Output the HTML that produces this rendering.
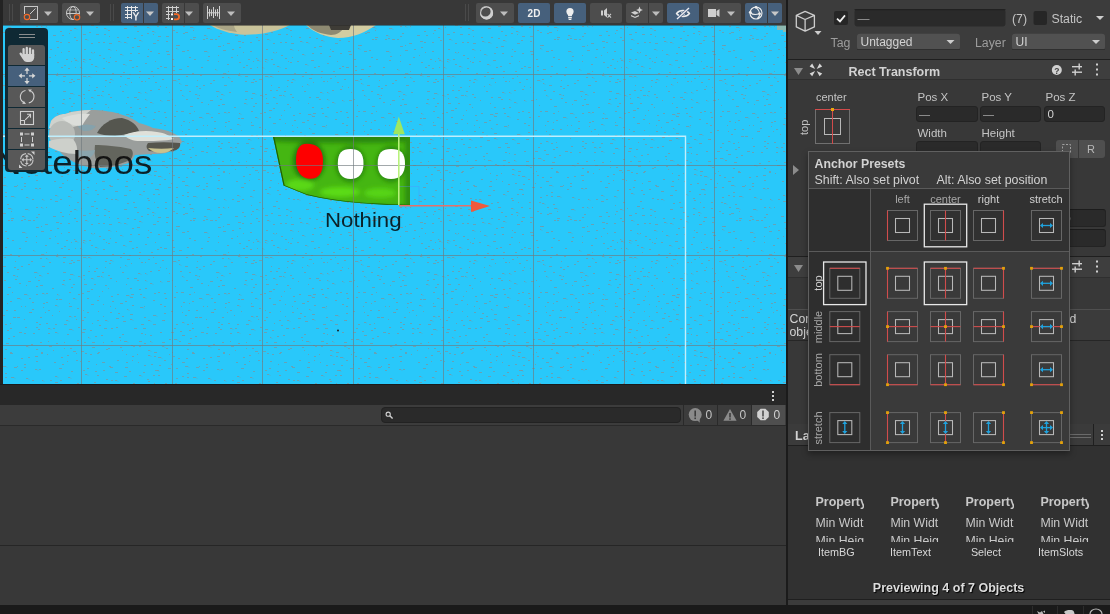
<!DOCTYPE html>
<html><head><meta charset="utf-8">
<style>
*{margin:0;padding:0;box-sizing:border-box}
html,body{width:1110px;height:614px;overflow:hidden;background:#191919;font-family:"Liberation Sans",sans-serif;color:#c4c4c4}
.a{position:absolute}
.btn{position:absolute;background:#4d4d4d;border-radius:2px}
.sel{background:#46607c}
.dd{position:absolute;width:0;height:0;border-left:4px solid transparent;border-right:4px solid transparent;border-top:5px solid #bdbdbd}
.fld{position:absolute;background:#2a2a2a;border:1px solid #232323;border-radius:3px}
.lbl{position:absolute;font-size:11.5px;color:#c4c4c4;white-space:nowrap;line-height:1}
</style></head><body><div id="root" style="position:absolute;left:0;top:0;width:1110px;height:614px;background:#191919;will-change:transform;overflow:hidden">
<!-- scene toolbar -->
<div class="a" style="left:0;top:0;width:786px;height:25px;background:#383838"></div>
<div class="a" style="left:0;top:0;width:3px;height:384px;background:#232323"></div>
<!-- toolbar content -->
<div class="a" style="left:9px;top:4px;width:1px;height:17px;background:#4a4a4a"></div>
<div class="a" style="left:12px;top:4px;width:1px;height:17px;background:#4a4a4a"></div>
<div class="btn" style="left:20px;top:3px;width:38px;height:20px"></div>
<svg class="a" style="left:20px;top:3px" width="38" height="20">
<rect x="4.5" y="3.5" width="13" height="13" fill="none" stroke="#c8c8c8" stroke-width="1"/>
<line x1="10" y1="11" x2="15.5" y2="5.5" stroke="#c8c8c8" stroke-width="1"/>
<rect x="4" y="11" width="6" height="6" fill="#4d4d4d"/>
<circle cx="7" cy="14" r="2.7" fill="none" stroke="#f26b2a" stroke-width="1.2"/>
<path d="M24 8.5h8l-4 4.5z" fill="#bdbdbd"/>
</svg>
<div class="btn" style="left:62px;top:3px;width:38px;height:20px"></div>
<svg class="a" style="left:62px;top:3px" width="38" height="20">
<circle cx="11" cy="10" r="6.5" fill="none" stroke="#c8c8c8" stroke-width="1"/>
<ellipse cx="11" cy="10" rx="3.2" ry="6.5" fill="none" stroke="#c8c8c8" stroke-width="1"/>
<line x1="4.5" y1="10.5" x2="17.5" y2="10.5" stroke="#c8c8c8" stroke-width="1"/>
<line x1="5.5" y1="7" x2="16.5" y2="7" stroke="#c8c8c8" stroke-width="0.8"/>
<circle cx="15" cy="14.3" r="3.6" fill="#4d4d4d"/>
<circle cx="15" cy="14.3" r="2.7" fill="none" stroke="#f26b2a" stroke-width="1.2"/>
<path d="M24 8.5h8l-4 4.5z" fill="#bdbdbd"/>
</svg>
<div class="a" style="left:110px;top:4px;width:1px;height:17px;background:#4a4a4a"></div>
<div class="a" style="left:113px;top:4px;width:1px;height:17px;background:#4a4a4a"></div>
<div class="btn sel" style="left:121px;top:3px;width:22px;height:20px;border-radius:2px 0 0 2px"></div>
<div class="btn sel" style="left:144px;top:3px;width:14px;height:20px;border-radius:0 2px 2px 0"></div>
<svg class="a" style="left:121px;top:3px" width="37" height="20">
<g stroke="#e8e8e8" stroke-width="1" fill="none">
<path d="M4 4.5h13M4 7.5h13M4 11.5h7M4 14.5h6M6.5 3v13M10.5 3v13M14.5 3v6"/>
</g>
<path d="M11.4 9.2h1.6l1.9 3.2 1.9-3.2h1.6l-2.8 4.6v3.6h-1.4v-3.6z" fill="#f0f0f0"/>
<path d="M27 8.5h8l-4 4.5z" fill="#c8c8c8" transform="translate(-2,0)"/>
</svg>
<div class="btn" style="left:162px;top:3px;width:22px;height:20px;border-radius:2px 0 0 2px"></div>
<div class="btn" style="left:185px;top:3px;width:14px;height:20px;border-radius:0 2px 2px 0"></div>
<svg class="a" style="left:162px;top:3px" width="37" height="20">
<g stroke="#cfcfcf" stroke-width="1" fill="none">
<path d="M4 4.5h13M4 8.5h13M4 11.5h4M4 15.5h4M6.5 3v14M10.5 3v7M14.5 3v7"/>
</g>
<rect x="9" y="10.4" width="2" height="2" fill="#fff"/>
<rect x="9" y="15" width="2" height="2" fill="#fff"/>
<path d="M12 11.2h2.5a2.6 2.6 0 0 1 0 5.2H12" fill="none" stroke="#f26b2a" stroke-width="1.8"/>
<path d="M23 8.5h8l-4 4.5z" fill="#bdbdbd"/>
</svg>
<div class="btn" style="left:203px;top:3px;width:38px;height:20px"></div>
<svg class="a" style="left:203px;top:3px" width="38" height="20">
<g stroke="#d0d0d0" stroke-width="1" fill="none">
<path d="M4.5 3v13M16.5 3v13M4.5 9.8h12M6.5 6v7.5M8.5 6.5v6.5M10.5 4v11M12.5 6.5v6.5M14.5 6v7.5"/>
</g>
<path d="M24 8.5h8l-4 4.5z" fill="#bdbdbd"/>
</svg>
<div class="a" style="left:465px;top:4px;width:1px;height:17px;background:#4a4a4a"></div>
<div class="a" style="left:468px;top:4px;width:1px;height:17px;background:#4a4a4a"></div>
<div class="btn" style="left:476px;top:3px;width:38px;height:20px"></div>
<svg class="a" style="left:476px;top:3px" width="38" height="20">
<circle cx="10.6" cy="9.9" r="6" fill="none" stroke="#cfcfcf" stroke-width="1.1"/>
<path d="M17.1 9.9a6.5 6.5 0 1 1 -13 0a6.5 6.5 0 1 1 13 0z M14.6 8.4a5.2 5.2 0 1 0 -10.4 0a5.2 5.2 0 1 0 10.4 0z" fill="#cfcfcf" fill-rule="evenodd"/>
<path d="M24 8.5h8l-4 4.5z" fill="#bdbdbd"/>
</svg>
<div class="btn sel" style="left:518px;top:3px;width:32px;height:20px"></div>
<div class="a" style="left:518px;top:4px;width:32px;height:20px;text-align:center;font-weight:bold;font-size:10px;line-height:20px;color:#f0f0f0">2D</div>
<div class="btn sel" style="left:554px;top:3px;width:32px;height:20px"></div>
<svg class="a" style="left:554px;top:3px" width="32" height="20">
<circle cx="16" cy="8.6" r="3.6" fill="#eeeeee"/>
<path d="M13.6 10.5h4.8l-0.6 2.8h-3.6z" fill="#eeeeee"/>
<rect x="14.2" y="14" width="3.6" height="1.4" fill="#eeeeee"/>
<rect x="14.6" y="15.8" width="2.8" height="1.2" fill="#eeeeee"/>
</svg>
<div class="btn" style="left:590px;top:3px;width:32px;height:20px"></div>
<svg class="a" style="left:590px;top:3px" width="32" height="20">
<rect x="11" y="7.5" width="2" height="5" fill="#cfcfcf"/>
<path d="M14 7.5l3-2.5v9.5l-3-2.5z" fill="#cfcfcf"/>
<path d="M17.5 10.8l3.5 3.8M21 10.8l-3.5 3.8" stroke="#cfcfcf" stroke-width="1.1"/>
</svg>
<div class="btn" style="left:626px;top:3px;width:22px;height:20px;border-radius:2px 0 0 2px"></div>
<div class="btn" style="left:649px;top:3px;width:14px;height:20px;border-radius:0 2px 2px 0"></div>
<svg class="a" style="left:626px;top:3px" width="37" height="20">
<path d="M5 9.5l4-1.5 4 2 -4 1.8z" fill="#cfcfcf"/>
<path d="M5 12l4 1.8 4-1.8 0 1.3 -4 1.8 -4-1.8z" fill="#cfcfcf"/>
<path d="M13.5 3.5l1 2.4 2.4 1 -2.4 1 -1 2.4 -1-2.4 -2.4-1 2.4-1z" fill="#cfcfcf"/>
<path d="M26 8.5h8l-4 4.5z" fill="#bdbdbd"/>
</svg>
<div class="btn sel" style="left:667px;top:3px;width:32px;height:20px"></div>
<svg class="a" style="left:667px;top:3px" width="32" height="20">
<path d="M9.5 10.5c3-4 10-4 13 0c-3 4-10 4-13 0z" fill="none" stroke="#eeeeee" stroke-width="1.3"/>
<circle cx="16" cy="10.5" r="2" fill="#eeeeee"/>
<path d="M10 16l12-11" stroke="#46608a" stroke-width="2.5"/>
<path d="M10 16l12-11" stroke="#eeeeee" stroke-width="1.3"/>
</svg>
<div class="btn" style="left:703px;top:3px;width:38px;height:20px"></div>
<svg class="a" style="left:703px;top:3px" width="38" height="20">
<rect x="5" y="6" width="8" height="8" fill="#cfcfcf"/>
<path d="M13.5 8l3-2v8l-3-2z" fill="#cfcfcf"/>
<path d="M24 8.5h8l-4 4.5z" fill="#bdbdbd"/>
</svg>
<div class="btn sel" style="left:745px;top:3px;width:22px;height:20px;border-radius:2px 0 0 2px"></div>
<div class="btn sel" style="left:768px;top:3px;width:14px;height:20px;border-radius:0 2px 2px 0"></div>
<svg class="a" style="left:745px;top:3px" width="37" height="20">
<g stroke="#eeeeee" stroke-width="1.1" fill="none">
<circle cx="11" cy="10" r="6"/>
<path d="M5.2 9.5c2 2 6 2.5 9.5 1M11 4.2c2 2 3.5 4 3.7 6.5c0 2-1 4-2.5 5"/>
</g>
<circle cx="11" cy="4.3" r="1.4" fill="#eee"/>
<circle cx="5.3" cy="9.3" r="1.4" fill="#eee"/>
<circle cx="14.6" cy="10.8" r="1.4" fill="#eee"/>
<path d="M26 8.5h8l-4 4.5z" fill="#c8c8c8"/>
</svg>

<!-- scene -->
<div class="a" id="scene" style="left:3px;top:25px;width:783px;height:359px;background:#29c8fa;overflow:hidden">
<svg width="783" height="359" style="position:absolute;left:0;top:0">
<defs><pattern id="sp" width="182" height="181" patternUnits="userSpaceOnUse"><path d="M5 2.5h3l1 1M8 5.5h1M22 3.5h3l1 1M33 1.5h2M38 1.5h1l1 1M43 1.5h1M57 6.5h2M67 5.5h2M71 3.5h2l1 1M78 2.5h1M88 0.5h3M93 2.5h2M101 3.5h2l1 1M105 5.5h2M121 3.5h3M131 1.5h3M134 6.5h2M144 2.5h2l1 1M149 6.5h2l1 1M154 1.5h2M162 2.5h2M170 5.5h2M180 1.5h2M0 7.5h3M8 12.5h3M19 10.5h2l1 1M21 13.5h2M33 11.5h2M35 8.5h2M50 10.5h3M59 10.5h2M66 8.5h1M71 12.5h2M80 9.5h3M86 7.5h2M93 9.5h3M101 9.5h2M106 11.5h1M114 12.5h2M124 12.5h2M131 13.5h2M138 10.5h2M144 8.5h2M150 9.5h1M155 11.5h3M163 11.5h3M173 7.5h2M180 8.5h2M5 14.5h2M8 14.5h2M18 14.5h2M25 14.5h3M30 14.5h2M38 20.5h1M42 18.5h3M53 16.5h3M57 17.5h2M65 17.5h2M73 15.5h2M82 14.5h2l1 1M88 18.5h2M95 17.5h2M100 17.5h2M106 18.5h3M115 16.5h2l1 1M121 17.5h2l1 1M136 15.5h2l1 1M150 18.5h3M154 15.5h2M163 16.5h2M173 20.5h3M175 20.5h2M2 25.5h2M19 26.5h3l1 1M33 21.5h3M38 25.5h3M47 24.5h2M54 22.5h2M58 27.5h1M65 26.5h2M81 24.5h2M88 27.5h1l1 1M91 27.5h1M105 24.5h2l1 1M113 25.5h1M129 22.5h2M134 21.5h3M145 24.5h1M147 26.5h2M163 26.5h3M173 23.5h1l1 1M179 26.5h3M4 32.5h2M9 34.5h2M23 31.5h2M33 30.5h1M46 32.5h2M52 30.5h1M63 34.5h2M71 33.5h1l1 1M80 34.5h2l1 1M86 34.5h2M96 30.5h2M100 33.5h2M107 32.5h1M117 29.5h2l1 1M127 28.5h2M135 28.5h2M144 31.5h2M155 28.5h2M164 29.5h3M169 34.5h2M2 41.5h2M22 35.5h2M33 36.5h1M42 39.5h2M54 37.5h2M61 40.5h2M68 36.5h1M72 35.5h2l1 1M80 36.5h1l1 1M88 39.5h2M92 41.5h2l1 1M103 36.5h1M105 37.5h2M112 36.5h2M120 39.5h2l1 1M126 35.5h3M133 41.5h2M142 38.5h2M152 36.5h1M157 41.5h2M170 41.5h2M7 48.5h2M16 42.5h2M30 44.5h1l1 1M38 48.5h3l1 1M43 46.5h1M54 48.5h1M58 42.5h2M65 43.5h2M72 42.5h1M77 42.5h1l1 1M93 46.5h1M100 43.5h2M109 48.5h2M120 47.5h2M129 42.5h2M136 46.5h2M148 46.5h2M154 43.5h2M161 42.5h3M170 45.5h2M176 44.5h3M1 51.5h2M12 55.5h1M15 50.5h2M28 55.5h2M37 52.5h2M43 52.5h1l1 1M53 50.5h2l1 1M60 51.5h3M68 54.5h2M74 54.5h3M80 51.5h3l1 1M85 51.5h2l1 1M102 55.5h2M107 54.5h2l1 1M117 51.5h2M124 53.5h3M126 49.5h2M136 52.5h1M145 53.5h2M150 51.5h1M159 54.5h2M170 55.5h3l1 1M175 54.5h2M0 60.5h3M11 61.5h2M18 60.5h2M25 58.5h2M39 60.5h3M46 56.5h2M60 56.5h2M66 57.5h3M70 56.5h2M86 60.5h1M93 62.5h2M102 61.5h1M106 57.5h2M117 61.5h1M122 59.5h1l1 1M128 57.5h1M138 56.5h2M142 56.5h1M152 57.5h2M157 61.5h1M163 62.5h1M176 58.5h1l1 1M4 66.5h2M10 69.5h2l1 1M14 63.5h2M31 66.5h3l1 1M36 69.5h2l1 1M44 67.5h2M60 66.5h3M67 68.5h3l1 1M80 69.5h2M85 65.5h2M91 65.5h2M99 66.5h2M105 69.5h2M119 66.5h2M135 67.5h2l1 1M142 67.5h1l1 1M147 65.5h2M155 64.5h2M166 67.5h1M177 65.5h2M1 74.5h2M12 73.5h2M14 70.5h1M25 75.5h3M32 71.5h1M35 74.5h2M60 74.5h2M66 73.5h2M75 70.5h2l1 1M81 73.5h1M88 72.5h2l1 1M94 70.5h3M98 70.5h1l1 1M107 72.5h2M113 75.5h1M124 72.5h2M131 72.5h3M134 74.5h2M142 74.5h1l1 1M157 75.5h1l1 1M164 75.5h3M169 74.5h1M179 70.5h1l1 1M5 81.5h3M16 77.5h2M23 79.5h1M33 80.5h2M37 79.5h3M49 82.5h2M59 78.5h2l1 1M68 81.5h2M70 78.5h2M81 78.5h3M88 83.5h2M91 78.5h2M102 79.5h2M105 82.5h1M123 78.5h1M127 82.5h2M136 83.5h2M142 82.5h2M147 77.5h2l1 1M172 80.5h1M4 88.5h2M9 86.5h1M21 88.5h3l1 1M33 88.5h2M39 87.5h2l1 1M43 87.5h2M54 88.5h1l1 1M66 86.5h2M75 88.5h2M79 87.5h2M84 85.5h3M96 90.5h1M99 85.5h1M108 90.5h2M114 88.5h2M123 89.5h3l1 1M128 88.5h3M137 88.5h2M151 87.5h2M155 86.5h2M161 87.5h2M173 86.5h2M178 86.5h3M4 97.5h1M7 95.5h2M14 92.5h3l1 1M26 92.5h2M29 96.5h2M40 97.5h2M43 96.5h2M53 93.5h2M56 93.5h3M66 97.5h1M70 92.5h2l1 1M84 92.5h2M94 94.5h2M109 95.5h2M117 97.5h3M122 95.5h2M127 91.5h3M140 91.5h2l1 1M150 94.5h2M162 92.5h2M171 91.5h2M180 96.5h2M3 104.5h2M11 104.5h2M18 100.5h1M22 100.5h1M29 103.5h2M40 101.5h1M45 104.5h2M52 99.5h2l1 1M66 100.5h3M74 102.5h2M80 104.5h1M88 98.5h3M100 98.5h1M107 100.5h1M112 102.5h1M124 103.5h1l1 1M129 99.5h2M137 101.5h3l1 1M141 100.5h1M157 98.5h2M161 100.5h2M178 100.5h1M0 109.5h2M10 111.5h3M14 111.5h3M26 106.5h3M28 106.5h1M37 111.5h2M42 106.5h1M49 109.5h1M56 105.5h1M66 110.5h2l1 1M71 110.5h2M81 111.5h2M84 106.5h2M95 105.5h1M100 110.5h1M107 106.5h2M115 107.5h2M119 110.5h2M127 108.5h3M141 111.5h2M150 109.5h3l1 1M161 107.5h2M168 105.5h2M179 106.5h1M2 118.5h2M7 117.5h1M21 113.5h1M33 116.5h2M36 118.5h2M43 117.5h2M52 118.5h2M61 118.5h3M63 114.5h2l1 1M73 113.5h1M79 114.5h2M89 117.5h1M94 114.5h2M102 114.5h2l1 1M113 112.5h3M120 115.5h3M127 113.5h2l1 1M138 118.5h3M145 114.5h2l1 1M150 118.5h3M159 114.5h3M161 114.5h1M173 118.5h2M179 116.5h2l1 1M4 124.5h2M7 122.5h2M22 121.5h2M33 121.5h2M35 123.5h2M45 122.5h2l1 1M50 122.5h2M66 123.5h3l1 1M75 121.5h2M80 123.5h3M87 124.5h2M96 119.5h2M101 122.5h3M108 122.5h2M113 121.5h2M131 122.5h3M140 122.5h3M171 122.5h2M177 125.5h2M5 132.5h2M10 130.5h2M16 126.5h3M21 127.5h2M30 127.5h2M45 127.5h2M52 126.5h2l1 1M64 128.5h2M79 126.5h3M85 131.5h1l1 1M92 130.5h2M98 129.5h2M116 131.5h2M119 128.5h2M138 127.5h2M142 128.5h1M147 129.5h2M157 126.5h2M168 126.5h3M179 129.5h3M3 137.5h3M28 138.5h2M37 136.5h2M45 135.5h1M53 137.5h2M61 136.5h1M74 134.5h2M81 136.5h2M89 136.5h3M100 136.5h1M108 135.5h2M117 134.5h1M121 135.5h3l1 1M128 139.5h2M136 135.5h3M141 137.5h2M147 135.5h1l1 1M159 136.5h3M166 133.5h2M171 133.5h3l1 1M176 135.5h2M2 143.5h2M7 146.5h2M23 140.5h2l1 1M33 143.5h2M38 146.5h2M46 140.5h3M50 144.5h1M61 142.5h1M67 142.5h2M70 145.5h3M78 145.5h3M89 141.5h3M95 146.5h2M103 143.5h2M105 142.5h2M117 141.5h2M119 144.5h1M130 140.5h2M136 140.5h2M145 144.5h2l1 1M151 146.5h3M159 140.5h2l1 1M163 142.5h2M169 146.5h1M1 152.5h2M7 147.5h3M18 152.5h2M25 151.5h2M32 150.5h3M38 147.5h2M44 148.5h1M58 151.5h2M64 149.5h2M73 147.5h1M82 147.5h2M87 148.5h2M94 147.5h2M123 148.5h1M129 150.5h2M134 148.5h1M145 149.5h2l1 1M151 150.5h2M155 151.5h3l1 1M166 148.5h1M170 150.5h2M175 152.5h2M0 160.5h3l1 1M14 160.5h1M21 158.5h2M33 155.5h2M51 156.5h2M59 158.5h2M64 155.5h1M73 154.5h2M77 155.5h1M85 155.5h2M93 158.5h1M99 156.5h3M106 160.5h2M114 154.5h2M123 156.5h2M129 154.5h1M135 156.5h1M141 159.5h2M148 158.5h2M156 159.5h2M161 154.5h2M168 158.5h1M179 156.5h3M2 167.5h2M11 161.5h3M18 164.5h2M21 161.5h2M32 163.5h2l1 1M36 163.5h2M56 162.5h3M68 165.5h2M80 164.5h2M84 162.5h2M92 165.5h2M100 164.5h2M107 161.5h3M112 166.5h3M122 161.5h3M126 165.5h2M140 166.5h2M152 164.5h3l1 1M154 164.5h2M165 162.5h3M173 162.5h2M2 171.5h2M8 171.5h3l1 1M23 172.5h2l1 1M29 174.5h2M39 174.5h1l1 1M47 174.5h2M52 170.5h2l1 1M57 174.5h2M65 171.5h2l1 1M82 168.5h2l1 1M94 169.5h2M103 173.5h2M108 174.5h2M112 174.5h2l1 1M121 170.5h3M136 169.5h2l1 1M144 173.5h2M150 169.5h2M155 169.5h2M173 172.5h2M179 170.5h2M4 179.5h2M25 181.5h2M36 181.5h2M45 181.5h2M52 176.5h3M56 181.5h2M66 180.5h1M74 177.5h2M82 181.5h1M86 181.5h2M91 176.5h2M98 181.5h1M124 178.5h2M130 177.5h2M145 175.5h2M151 177.5h1M162 177.5h2M172 177.5h2M175 178.5h2l1 1" stroke="#7a959f" stroke-width="1" fill="none" opacity="0.75"/></pattern></defs>
<rect width="783" height="359" fill="url(#sp)"/>
</svg>
</div>
<svg class="a" style="left:0;top:0" width="786" height="384">
<defs>
<clipPath id="sc"><rect x="3" y="25" width="783" height="359"/></clipPath>
<linearGradient id="gv" x1="0" y1="0" x2="0" y2="1">
<stop offset="0" stop-color="#2f8a0c"/><stop offset="0.35" stop-color="#3fb510"/><stop offset="0.7" stop-color="#4fcf12"/><stop offset="1" stop-color="#237008"/>
</linearGradient>
<linearGradient id="cl" x1="0" y1="0" x2="1" y2="1">
<stop offset="0" stop-color="#d8dcd8"/><stop offset="0.5" stop-color="#9ea4a2"/><stop offset="1" stop-color="#55585a"/>
</linearGradient>
<linearGradient id="cl2" x1="0" y1="0" x2="1" y2="0">
<stop offset="0" stop-color="#e0e2dc"/><stop offset="0.6" stop-color="#9a9c96"/><stop offset="1" stop-color="#c8c29a"/>
</linearGradient>
<radialGradient id="tc" cx="0.5" cy="0.2" r="0.7">
<stop offset="0" stop-color="#8c8a70"/><stop offset="0.6" stop-color="#c9c396"/><stop offset="1" stop-color="#ddd7ad"/>
</radialGradient>
</defs>
<g clip-path="url(#sc)">
<!-- top clouds -->
<path d="M210 25c8 5 18 8 30 9.5c18 1 35-2 50-9.5z" fill="#c9c39a"/>
<path d="M212 25c8 4 16 6 25 7c-2-3-3-5-3-7z" fill="#a9a486"/>
<path d="M306 25c8 8 20 12 32 13c15 0 28-6 38-13z" fill="#d3cda2"/>
<path d="M307 25c6 6 14 9 24 10c6 0 10-3 16-10z" fill="#8e8a72"/>
<path d="M329 25h22l-2 5h-18z" fill="#3e3c36"/>
<path d="M777 25h9v7h-3v-2h-6z" fill="#b8b090" opacity="0.7"/>
<!-- left cloud -->
<filter id="cb" x="-10%" y="-10%" width="120%" height="120%"><feGaussianBlur stdDeviation="0.6"/></filter>
<g filter="url(#cb)">
<path d="M51 121c4-5 9-7 14-7c8-3 17-4 26-4c12 0 24 2 32 5c7 2 12 5 16 8c5 1 10 3 14 5c7 1 14 2 20 5c5 2 8 5 9 9c-3 5-8 8-13 10c-6 2-11 2-17 2c-6 0-11 1-17 1c-2 3-3 6-6 8c-10 3-20 5-29 5c-12 1-24-4-33-10c-6-4-9-8-10-12c-1-6 0-10 0-15c0-4 2-7 4-10z" fill="#9a9e9c"/>
<path d="M51 121c4-5 9-7 14-7c8-3 17-4 26-4c-6 4-10 10-14 16c-8 2-16 3-28 2z" fill="#cfd2cd"/>
<path d="M62 118c8-3 18-5 28-4c-3 4-6 8-8 12c-8 0-14-2-20-8z" fill="#dcdeda"/>
<ellipse cx="62" cy="134" rx="13" ry="13" fill="#b9bcb8"/>
<path d="M49 141c6-2 14-3 24-2c4 5 5 10 3 15c-10 0-19-3-27-7z" fill="#cdd0cb"/>
<path d="M78 126c6-2 12-2 18 0c-2 3-6 5-10 5c-4 0-7-2-8-5z" fill="#7fa2b0" opacity="0.8"/>
<path d="M97 133c5-9 14-15 25-15c9 2 15 7 17 13c-7 2-15 4-24 5c-7 0-13-1-18-3z" fill="#55564f"/>
<path d="M95 145c9 0 22 1 36 4c3 3 2 8-1 11c-9 4-19 7-30 7c-5-6-6-13-5-22z" fill="#64655d"/>
<path d="M76 150c6 1 13 1 19 0c-1 5-4 8-9 9c-5 0-9-3-10-9z" fill="#8aa5ae"/>
<path d="M124 135c10-4 22-5 33-3c8 1 13 4 17 7c-9 2-22 2-34 2c-7 0-12-2-16-6z" fill="#dfe0d9"/>
<path d="M148 143c10-1 21-1 32-0c1 4-2 7-7 8c-8 1-17 1-24 0c-3-3-3-5-1-8z" fill="#56564e"/>
<path d="M148 148c9 1 18 1 26 0c-3 3-8 5-13 5c-5 0-10-2-13-5z" fill="#c9c28e"/>
</g>
<!-- green object -->
<clipPath id="gclip"><path d="M273 136.5h137v69c-30-1-70-2-103-10.5l-23.5-9.5z"/></clipPath>
<filter id="gb" x="-20%" y="-20%" width="140%" height="140%"><feGaussianBlur stdDeviation="2.2"/></filter><filter id="er"><feMorphology operator="erode" radius="0.25"/></filter>
<g clip-path="url(#gclip)">
<rect x="270" y="134" width="145" height="75" fill="#45b612"/>
<g filter="url(#gb)">
<path d="M268 132h150v9c-40 3-100 3-150 0z" fill="#2a880a"/>
<ellipse cx="309" cy="161" rx="16" ry="20" fill="#237a0a"/>
<ellipse cx="350.5" cy="164" rx="15" ry="18" fill="#2c8a0c"/>
<ellipse cx="391" cy="164" rx="15" ry="18" fill="#2c8a0c"/>
<ellipse cx="300" cy="185" rx="14" ry="6" fill="#5ad816"/>
<ellipse cx="340" cy="192" rx="20" ry="5" fill="#5cdc18"/>
<ellipse cx="380" cy="193" rx="16" ry="5" fill="#56d414"/>
<path d="M268 199c30 6 90 9 150 7v8h-150z" fill="#237008"/>
<rect x="405" y="132" width="8" height="80" fill="#2f8e0c"/>
</g>
<path d="M273 136.5l10.6 49.5l23.4 9.5c33 8.5 73 9.5 103 10.5" fill="none" stroke="#1d6006" stroke-width="2.4"/>
</g>
<path d="M307 143.7c10 0 16 5 16 17c0 12-4 18-13 18c-8 0-14-7-14-18c0-11 3-17 11-17z" fill="#fe0000"/>
<path d="M350.5 149c8.5 0 13 4 13 14.5c0 10-4.5 15.5-13 15.5c-8.5 0-12.7-5.5-12.7-15.5c0-10.5 4.2-14.5 12.7-14.5z" fill="#ffffff"/>
<path d="M391 149c9.5 0 14 4 14 14.5c0 10-4.5 15.5-14 15.5c-9 0-13.3-5.5-13.3-15.5c0-10.5 4.3-14.5 13.3-14.5z" fill="#ffffff"/>
<!-- grid -->
<g stroke="#707a7e" stroke-opacity="0.65" stroke-width="1">
<path d="M81.5 25v359M172.5 25v359M262.5 25v359M353.5 25v359M443.5 25v359M533.5 25v359M624.5 25v359M714.5 25v359"/>
<path d="M3 74.5h783M3 165.5h783M3 255.5h783M3 345.5h783"/>
</g>
<!-- canvas rect -->
<path d="M0 136.3h685.5v260" fill="none" stroke="#c0eefc" stroke-width="1.4"/>
<!-- text -->
<text transform="translate(-5,173.5) scale(1.115,1)" font-family="Liberation Sans" font-size="33" fill="#050505" fill-opacity="0.85">Noteboos</text>
<text transform="translate(325,227) scale(1.17,1.05)" font-family="Liberation Sans" font-size="19" fill="#050505" fill-opacity="0.85">Nothing</text>
<circle cx="338" cy="330.5" r="0.9" fill="#111"/>
<!-- gizmo -->
<path d="M399 186.5h20v19" fill="none" stroke="#5a8cff" stroke-width="1" opacity="0.35"/>
<line x1="399" y1="205.7" x2="472" y2="205.7" stroke="#e6706a" stroke-width="1.6"/>
<path d="M471 200.5l19 5.5l-19 6z" fill="#ee5a3c"/>
<line x1="398.8" y1="205" x2="398.8" y2="133" stroke="#b8f27c" stroke-width="1.6"/>
<path d="M393.2 134.2l5.6-17.5l6 17.5z" fill="#9fe760"/>
</g>
</svg>
<div class="a" style="left:3px;top:25px;width:783px;height:1px;background:rgba(40,40,40,0.5)"></div>
<!-- overlay tools -->
<div class="a" style="left:5px;top:28px;width:43px;height:144px;background:#0f2934;border-radius:4px"></div>
<div class="a" style="left:19px;top:34px;width:16px;height:1px;background:#8a8d8e"></div>
<div class="a" style="left:19px;top:37px;width:16px;height:1px;background:#8a8d8e"></div>
<div class="a" style="left:8px;top:45px;width:37px;height:20px;background:#585858;border-radius:3px 3px 0 0"></div>
<div class="a" style="left:8px;top:66px;width:37px;height:20px;background:#46607c"></div>
<div class="a" style="left:8px;top:87px;width:37px;height:20px;background:#585858"></div>
<div class="a" style="left:8px;top:108px;width:37px;height:20px;background:#585858"></div>
<div class="a" style="left:8px;top:129px;width:37px;height:20px;background:#585858"></div>
<div class="a" style="left:8px;top:150px;width:37px;height:20px;background:#585858;border-radius:0 0 3px 3px"></div>
<svg class="a" style="left:8px;top:45px" width="37" height="125">
<!-- hand -->
<g stroke="#d2d2d2" stroke-linecap="round" fill="none">
<path d="M15.6 10V4.2M18.8 9.5V3M22 9.5V3.6M25 10.5V5.4" stroke-width="2.3"/>
<path d="M12.6 8.6l2.6 4" stroke-width="2.3"/>
</g>
<path d="M14.4 9h11.8v3.2c0 3-2 4.8-4.8 4.8h-2.4c-2 0-3.2-1.2-4.2-3z" fill="#d2d2d2"/>
<!-- move -->
<g stroke="#d8d8d8" stroke-width="1.2" fill="none">
<path d="M12 30.8h5M21 30.8h5M19 24v5M19 33v5"/>
</g>
<path d="M19 22.6l-2.6 3.2h5.2z M19 39.2l-2.6-3.2h5.2z M10.6 30.8l3.2-2.6v5.2z M27.4 30.8l-3.2-2.6v5.2z" fill="#d8d8d8"/>
<!-- rotate -->
<g fill="none" stroke="#d0d0d0" stroke-width="1.1">
<path d="M17.5 45.5a6.5 6.5 0 0 0 -2.5 11.6"/>
<path d="M20.8 57.9a6.5 6.5 0 0 0 2.5 -11.6"/>
</g>
<path d="M14.2 58.8l3.8 0.2-2.2-3.2z M23.8 44.6l-3.8-0.2 2.2 3.2z" fill="#d0d0d0"/>
<!-- scale -->
<g fill="none" stroke="#d0d0d0" stroke-width="1.1">
<rect x="12.5" y="66.5" width="13" height="13"/>
<path d="M12.5 75.5h4v4M17.2 74.8l5-5M19 69.3h3.5v3.5"/>
</g>
<!-- rect -->
<g fill="#d0d0d0">
<rect x="12" y="87.5" width="3" height="3"/><rect x="23" y="87.5" width="3" height="3"/><rect x="12" y="98.5" width="3" height="3"/><rect x="23" y="98.5" width="3" height="3"/>
<rect x="13" y="92" width="1" height="5"/><rect x="24" y="92" width="1" height="5"/><rect x="16.5" y="88.5" width="5" height="1"/><rect x="16.5" y="99.5" width="5" height="1"/>
</g>
<!-- transform -->
<g fill="none" stroke="#c8c8c8" stroke-width="1.1">
<circle cx="18.8" cy="114.8" r="6.2" stroke-dasharray="8 1.8"/>
</g>
<g stroke="#c8c8c8" stroke-width="1.1"><path d="M15 114.8h7.6M18.8 111v7.6"/></g>
<path d="M18.8 109.5l-2 2.2h4z M18.8 120.1l-2-2.2h4z M13.5 114.8l2.2-2v4z M24.1 114.8l-2.2-2v4z" fill="#c8c8c8"/>
<path d="M26.5 106.5v3.5l-3.5-3.5z M11 123v-3.5l3.5 3.5z" fill="#d0d0d0"/>
</svg>

<!-- divider -->
<div class="a" style="left:786px;top:0;width:2px;height:606px;background:#1b1b1b"></div>
<!-- inspector -->
<div class="a" style="left:788px;top:0;width:322px;height:599px;background:#383838"></div>
<!-- inspector content -->
<div class="a" style="left:788px;top:0;width:322px;height:59px;background:#3c3c3c"></div>
<div class="a" style="left:788px;top:59px;width:322px;height:1px;background:#1f1f1f"></div>
<div class="a" style="left:788px;top:60px;width:322px;height:19px;background:#3e3e3e"></div>
<div class="a" style="left:788px;top:79px;width:322px;height:1px;background:#2f2f2f"></div>
<svg class="a" style="left:788px;top:0" width="322" height="80">
<g fill="none" stroke="#cdcdcd" stroke-width="1.3" stroke-linejoin="round">
<path d="M17.1 11.3l9.3 4v11.6l-9.3 4.3l-8.8-4.3v-11.6z M8.3 15.3l8.8 4.2l9.3-4.2 M17.1 19.5v11.7"/>
</g>
<path d="M26.5 31h7l-3.5 4z" fill="#cdcdcd"/>
<rect x="46" y="11" width="14" height="14" rx="2" fill="#262626"/>
<path d="M49 18.6l3 2.8l5-6" fill="none" stroke="#f0f0f0" stroke-width="1.7"/>
<rect x="66.5" y="9.2" width="151" height="17.2" rx="3" fill="#2a2a2a"/>
<rect x="66.5" y="9.2" width="151" height="1" fill="#1f1f1f"/>
<rect x="69.5" y="19" width="12" height="1" fill="#8a8a8a"/>
<rect x="245.5" y="11" width="13.5" height="14" rx="2" fill="#262626"/>
<path d="M308 16h8l-4 4z" fill="#cdcdcd"/>
<rect x="69" y="33.8" width="103" height="16" rx="3" fill="#515151"/>
<rect x="69" y="49" width="103" height="1" fill="#2f2f2f"/>
<path d="M158.5 40h8l-4 4z" fill="#cdcdcd"/>
<rect x="224" y="33.8" width="93" height="16" rx="3" fill="#515151"/>
<rect x="224" y="49" width="93" height="1" fill="#2f2f2f"/>
<path d="M304 40h8l-4 4z" fill="#cdcdcd"/>
<!-- RT header -->
<path d="M6 68h9l-4.5 7z" fill="#8c8c8c"/>
<g fill="#d6d6d6">
<path d="M21.6 66.4l2.6-2.8 2.9 5.3z M34.2 66.4l-2.6-2.8-2.9 5.3z M21.6 73.4l2.6 2.8 2.9-5.3z M34.2 73.4l-2.6 2.8-2.9-5.3z"/>
</g>
<circle cx="268.8" cy="70" r="5" fill="#d0d0d0"/>
<text x="268.8" y="73.6" font-family="Liberation Sans" font-weight="bold" font-size="8.5" fill="#3e3e3e" text-anchor="middle">?</text>
<g fill="#d0d0d0">
<rect x="284" y="66" width="10" height="1.4"/><rect x="284" y="71.5" width="10" height="1.4"/>
<rect x="290.5" y="63.5" width="1.4" height="6"/><rect x="286.5" y="69.5" width="1.4" height="6"/>
<rect x="308" y="63.5" width="2" height="2"/><rect x="308" y="68.5" width="2" height="2"/><rect x="308" y="73.5" width="2" height="2"/>
</g>
</svg>
<div class="lbl" style="left:1012px;top:13px;font-size:12.3px;color:#c4c4c4">(7)</div>
<div class="lbl" style="left:1051.5px;top:13px;font-size:12.3px;color:#c4c4c4">Static</div>
<div class="lbl" style="left:830.5px;top:36.5px;font-size:12.3px;color:#9d9d9d">Tag</div>
<div class="lbl" style="left:860.5px;top:35.7px;font-size:12px;color:#d2d2d2">Untagged</div>
<div class="lbl" style="left:975px;top:36.5px;font-size:12.3px;color:#9d9d9d">Layer</div>
<div class="lbl" style="left:1015.5px;top:35.7px;font-size:12px;color:#d2d2d2">UI</div>
<div class="lbl" style="left:848.5px;top:66px;font-size:12.5px;font-weight:bold;color:#d2d2d2">Rect Transform</div>
<!-- RT body -->
<div class="lbl" style="left:816px;top:92px;font-size:11px;color:#c4c4c4">center</div>
<div class="lbl" style="left:799px;top:135px;font-size:11px;color:#c4c4c4;transform:rotate(-90deg);transform-origin:0 0">top</div>
<svg class="a" style="left:788px;top:80px" width="322" height="180">
<rect x="27.5" y="29.5" width="34" height="34" fill="none" stroke="#707070" stroke-width="1"/>
<rect x="36.5" y="38.5" width="16" height="16" fill="none" stroke="#b8b8b8" stroke-width="1"/>
<path d="M27 29.5h35M44.5 29v35" stroke="#d24b4b" stroke-width="1"/>
<rect x="43" y="28" width="3" height="3" fill="#e8a60c"/>
</svg>
<div class="lbl" style="left:917.5px;top:92px;font-size:11.5px">Pos X</div>
<div class="lbl" style="left:981.5px;top:92px;font-size:11.5px">Pos Y</div>
<div class="lbl" style="left:1045.5px;top:92px;font-size:11.5px">Pos Z</div>
<div class="fld" style="left:916px;top:105.5px;width:61.5px;height:16.7px"></div>
<div class="fld" style="left:980.3px;top:105.5px;width:61px;height:16.7px"></div>
<div class="fld" style="left:1044.4px;top:105.5px;width:61px;height:16.7px"></div>
<div class="a" style="left:919px;top:114.5px;width:11px;height:1px;background:#8a8a8a"></div>
<div class="a" style="left:983px;top:114.5px;width:11px;height:1px;background:#8a8a8a"></div>
<div class="lbl" style="left:1047.5px;top:109px;font-size:11.5px;color:#d2d2d2">0</div>
<div class="lbl" style="left:917.5px;top:128px;font-size:11.5px">Width</div>
<div class="lbl" style="left:981.5px;top:128px;font-size:11.5px">Height</div>
<div class="fld" style="left:916px;top:141.3px;width:61.5px;height:16.7px"></div>
<div class="fld" style="left:980.3px;top:141.3px;width:61px;height:16.7px"></div>
<div class="a" style="left:1055.5px;top:140px;width:22.5px;height:17.5px;background:#4f4f4f;border-radius:3px 0 0 3px"></div>
<div class="a" style="left:1078.6px;top:140px;width:26.2px;height:17.5px;background:#4f4f4f;border-radius:0 3px 3px 0"></div>
<svg class="a" style="left:1055px;top:140px" width="50" height="18">
<rect x="7.5" y="4.5" width="8" height="8" fill="none" stroke="#a0a0a0" stroke-dasharray="2 1.5"/>
</svg>
<div class="lbl" style="left:1087px;top:144px;font-size:11px;color:#b8b8b8">R</div>
<!-- behind popup -->
<svg class="a" style="left:788px;top:160px" width="322" height="300">
<path d="M5 5l6 5-6 5z" fill="#8c8c8c"/>


</svg>
<div class="fld" style="left:1044px;top:209px;width:61.5px;height:17.5px;border-top-color:#1c1c1c"></div>
<div class="fld" style="left:1044px;top:229.2px;width:61.5px;height:17.5px;border-top-color:#1c1c1c"></div>
<div class="lbl" style="left:1064px;top:212.5px;font-size:12px;color:#d2d2d2">0</div>
<div class="a" style="left:788px;top:256px;width:322px;height:1px;background:#1f1f1f"></div>
<div class="a" style="left:788px;top:257px;width:322px;height:20px;background:#3e3e3e"></div>
<div class="a" style="left:788px;top:277px;width:322px;height:1px;background:#2f2f2f"></div>
<svg class="a" style="left:788px;top:257px" width="322" height="20">
<path d="M6 8h9l-4.5 7z" fill="#8c8c8c"/>
<g fill="#d0d0d0">
<rect x="284" y="6" width="10" height="1.4"/><rect x="284" y="11.5" width="10" height="1.4"/>
<rect x="290.5" y="3.5" width="1.4" height="6"/><rect x="286.5" y="9.5" width="1.4" height="6"/>
<rect x="308" y="3.5" width="2" height="2"/><rect x="308" y="8.5" width="2" height="2"/><rect x="308" y="13.5" width="2" height="2"/>
</g>
</svg>
<div class="a" style="left:788px;top:309px;width:322px;height:32px;background:#3b3b3b;border-top:1px solid #4f4f4f;border-bottom:1px solid #262626"></div>
<div class="lbl" style="left:789.5px;top:312.5px;font-size:12.3px;color:#d2d2d2;line-height:13.8px">Con<br>obje</div>
<div class="lbl" style="left:1069.5px;top:312.5px;font-size:12.3px;color:#d2d2d2">d</div>
<!-- preview header -->
<div class="a" style="left:788px;top:423.5px;width:322px;height:1px;background:#1f1f1f"></div>
<div class="a" style="left:788px;top:424px;width:322px;height:21px;background:#3b3b3b"></div>
<div class="a" style="left:788px;top:445px;width:322px;height:1px;background:#1f1f1f"></div>
<div class="a" style="left:1093px;top:424px;width:1px;height:21px;background:#1f1f1f"></div>
<div class="a" style="left:1040px;top:434px;width:51px;height:1px;background:#6a6a6a"></div>
<div class="a" style="left:1040px;top:437px;width:51px;height:1px;background:#6a6a6a"></div>
<div class="a" style="left:1101px;top:430px;width:2px;height:2px;background:#d0d0d0"></div>
<div class="a" style="left:1101px;top:434px;width:2px;height:2px;background:#d0d0d0"></div>
<div class="a" style="left:1101px;top:438px;width:2px;height:2px;background:#d0d0d0"></div>
<div class="lbl" style="left:795px;top:430px;font-size:12.5px;font-weight:bold;color:#d2d2d2">Layout Properties</div>
<!-- preview area -->
<div class="a" style="left:788px;top:446px;width:322px;height:153px;background:#313131"></div>
<div class="a" style="left:788px;top:599px;width:322px;height:1px;background:#1f1f1f"></div>
<div class="a" style="left:788px;top:600px;width:322px;height:6px;background:#3b3b3b"></div>

<div class="a" style="left:815.5px;top:496px;width:48.5px;height:46px;overflow:hidden"><div class="lbl" style="left:0;top:0;font-size:12.5px;font-weight:bold;color:#c8c8c8">Property</div><div class="lbl" style="left:0;top:20.5px;font-size:12.3px;color:#c8c8c8">Min Width</div><div class="lbl" style="left:0;top:38.5px;font-size:12.3px;color:#c8c8c8">Min Height</div></div>
<div class="a" style="left:890.4px;top:496px;width:48.5px;height:46px;overflow:hidden"><div class="lbl" style="left:0;top:0;font-size:12.5px;font-weight:bold;color:#c8c8c8">Property</div><div class="lbl" style="left:0;top:20.5px;font-size:12.3px;color:#c8c8c8">Min Width</div><div class="lbl" style="left:0;top:38.5px;font-size:12.3px;color:#c8c8c8">Min Height</div></div>
<div class="a" style="left:965.5px;top:496px;width:48.5px;height:46px;overflow:hidden"><div class="lbl" style="left:0;top:0;font-size:12.5px;font-weight:bold;color:#c8c8c8">Property</div><div class="lbl" style="left:0;top:20.5px;font-size:12.3px;color:#c8c8c8">Min Width</div><div class="lbl" style="left:0;top:38.5px;font-size:12.3px;color:#c8c8c8">Min Height</div></div>
<div class="a" style="left:1040.4px;top:496px;width:48.5px;height:46px;overflow:hidden"><div class="lbl" style="left:0;top:0;font-size:12.5px;font-weight:bold;color:#c8c8c8">Property</div><div class="lbl" style="left:0;top:20.5px;font-size:12.3px;color:#c8c8c8">Min Width</div><div class="lbl" style="left:0;top:38.5px;font-size:12.3px;color:#c8c8c8">Min Height</div></div>
<div class="lbl" style="left:836.4px;top:546.5px;font-size:10.8px;color:#d8d8d8;transform:translateX(-50%)">ItemBG</div>
<div class="lbl" style="left:910.5px;top:546.5px;font-size:10.8px;color:#d8d8d8;transform:translateX(-50%)">ItemText</div>
<div class="lbl" style="left:985.9px;top:546.5px;font-size:10.8px;color:#d8d8d8;transform:translateX(-50%)">Select</div>
<div class="lbl" style="left:1060.6px;top:546.5px;font-size:10.8px;color:#d8d8d8;transform:translateX(-50%)">ItemSlots</div>
<div class="lbl" style="left:948.6px;top:582px;font-size:12.5px;font-weight:bold;color:#dcdcdc;transform:translateX(-50%);text-shadow:1px 1px 1px #000">Previewing 4 of 7 Objects</div>

<!-- popup -->
<div class="a" style="left:808px;top:151px;width:262px;height:300px;background:#3a3a3a;border:1px solid #606060;box-shadow:0 3px 6px rgba(0,0,0,0.35)"></div>
<div class="a" style="left:809px;top:188px;width:260px;height:1px;background:#5a5a5a"></div>
<div class="a" style="left:809px;top:189px;width:61px;height:261px;background:#2e2e2e"></div>
<div class="a" style="left:871px;top:189px;width:198px;height:62px;background:#313131"></div>
<div class="a" style="left:870px;top:189px;width:1px;height:261px;background:#5a5a5a"></div>
<div class="a" style="left:809px;top:251px;width:260px;height:1px;background:#5a5a5a"></div>
<div class="lbl" style="left:814.5px;top:157.5px;font-size:12.3px;font-weight:bold;color:#d2d2d2">Anchor Presets</div>
<div class="lbl" style="left:814.5px;top:173.5px;font-size:12.4px;color:#d2d2d2">Shift: Also set pivot</div>
<div class="lbl" style="left:936.5px;top:173.5px;font-size:12.4px;color:#d2d2d2">Alt: Also set position</div>
<div class="lbl" style="left:902.5px;top:194px;font-size:11px;color:#a8a8a8;transform:translateX(-50%)">left</div>
<div class="lbl" style="left:945.5px;top:194px;font-size:11px;color:#a8a8a8;transform:translateX(-50%)">center</div>
<div class="lbl" style="left:988.5px;top:194px;font-size:11px;color:#d0d0d0;transform:translateX(-50%)">right</div>
<div class="lbl" style="left:1046px;top:194px;font-size:11px;color:#d0d0d0;transform:translateX(-50%)">stretch</div>
<div class="lbl" style="left:812.5px;top:283.3px;font-size:11px;color:#d0d0d0;transform:rotate(-90deg) translateX(-50%);transform-origin:0 0">top</div>
<div class="lbl" style="left:812.5px;top:326.6px;font-size:11px;color:#a8a8a8;transform:rotate(-90deg) translateX(-50%);transform-origin:0 0">middle</div>
<div class="lbl" style="left:812.5px;top:369.7px;font-size:11px;color:#a8a8a8;transform:rotate(-90deg) translateX(-50%);transform-origin:0 0">bottom</div>
<div class="lbl" style="left:812.5px;top:427.6px;font-size:11px;color:#a8a8a8;transform:rotate(-90deg) translateX(-50%);transform-origin:0 0">stretch</div>
<svg class="a" style="left:0;top:0" width="1110" height="614">
<rect x="887.5" y="210.5" width="30" height="30" fill="none" stroke="#676767" stroke-width="1"/>
<rect x="895.5" y="218.5" width="14" height="14" fill="none" stroke="#b8b8b8" stroke-width="1.05"/>
<line x1="887.5" y1="210.5" x2="887.5" y2="240.5" stroke="#d04c4c" stroke-width="1.1"/>
<rect x="930.5" y="210.5" width="30" height="30" fill="none" stroke="#676767" stroke-width="1"/>
<rect x="938.5" y="218.5" width="14" height="14" fill="none" stroke="#b8b8b8" stroke-width="1.05"/>
<line x1="945.5" y1="210.5" x2="945.5" y2="240.5" stroke="#d04c4c" stroke-width="1.1"/>
<rect x="973.5" y="210.5" width="30" height="30" fill="none" stroke="#676767" stroke-width="1"/>
<rect x="981.5" y="218.5" width="14" height="14" fill="none" stroke="#b8b8b8" stroke-width="1.05"/>
<line x1="1003.5" y1="210.5" x2="1003.5" y2="240.5" stroke="#d04c4c" stroke-width="1.1"/>
<rect x="1031.5" y="210.5" width="30" height="30" fill="none" stroke="#676767" stroke-width="1"/>
<rect x="1039.5" y="218.5" width="14" height="14" fill="none" stroke="#b8b8b8" stroke-width="1.05"/>
<path d="M1041.5 225.5h10" stroke="#1fa2dd" stroke-width="1.3"/>
<path d="M1040.0 225.5l3-2.6v5.2z M1053.0 225.5l-3-2.6v5.2z" fill="#1fa2dd"/>
<rect x="829.8" y="268.3" width="30" height="30" fill="none" stroke="#676767" stroke-width="1"/>
<rect x="837.8" y="276.3" width="14" height="14" fill="none" stroke="#b8b8b8" stroke-width="1.05"/>
<line x1="829.8" y1="268.3" x2="859.8" y2="268.3" stroke="#d04c4c" stroke-width="1.1"/>
<rect x="829.8" y="311.6" width="30" height="30" fill="none" stroke="#676767" stroke-width="1"/>
<rect x="837.8" y="319.6" width="14" height="14" fill="none" stroke="#b8b8b8" stroke-width="1.05"/>
<line x1="829.8" y1="326.6" x2="859.8" y2="326.6" stroke="#d04c4c" stroke-width="1.1"/>
<rect x="829.8" y="354.7" width="30" height="30" fill="none" stroke="#676767" stroke-width="1"/>
<rect x="837.8" y="362.7" width="14" height="14" fill="none" stroke="#b8b8b8" stroke-width="1.05"/>
<line x1="829.8" y1="384.7" x2="859.8" y2="384.7" stroke="#d04c4c" stroke-width="1.1"/>
<rect x="829.8" y="412.6" width="30" height="30" fill="none" stroke="#676767" stroke-width="1"/>
<rect x="837.8" y="420.6" width="14" height="14" fill="none" stroke="#b8b8b8" stroke-width="1.05"/>
<path d="M844.8 422.6v10" stroke="#1fa2dd" stroke-width="1.3"/>
<path d="M844.8 421.1l-2.6 3h5.2z M844.8 434.1l-2.6-3h5.2z" fill="#1fa2dd"/>
<rect x="887.5" y="268.3" width="30" height="30" fill="none" stroke="#676767" stroke-width="1"/>
<rect x="895.5" y="276.3" width="14" height="14" fill="none" stroke="#b8b8b8" stroke-width="1.05"/>
<line x1="887.5" y1="268.3" x2="917.5" y2="268.3" stroke="#d04c4c" stroke-width="1.1"/>
<line x1="887.5" y1="268.3" x2="887.5" y2="298.3" stroke="#d04c4c" stroke-width="1.1"/>
<rect x="886.1" y="266.9" width="2.8" height="2.8" fill="#e5a20a"/>
<rect x="930.5" y="268.3" width="30" height="30" fill="none" stroke="#676767" stroke-width="1"/>
<rect x="938.5" y="276.3" width="14" height="14" fill="none" stroke="#b8b8b8" stroke-width="1.05"/>
<line x1="930.5" y1="268.3" x2="960.5" y2="268.3" stroke="#d04c4c" stroke-width="1.1"/>
<line x1="945.5" y1="268.3" x2="945.5" y2="298.3" stroke="#d04c4c" stroke-width="1.1"/>
<rect x="944.1" y="266.9" width="2.8" height="2.8" fill="#e5a20a"/>
<rect x="973.5" y="268.3" width="30" height="30" fill="none" stroke="#676767" stroke-width="1"/>
<rect x="981.5" y="276.3" width="14" height="14" fill="none" stroke="#b8b8b8" stroke-width="1.05"/>
<line x1="973.5" y1="268.3" x2="1003.5" y2="268.3" stroke="#d04c4c" stroke-width="1.1"/>
<line x1="1003.5" y1="268.3" x2="1003.5" y2="298.3" stroke="#d04c4c" stroke-width="1.1"/>
<rect x="1002.1" y="266.9" width="2.8" height="2.8" fill="#e5a20a"/>
<rect x="1031.5" y="268.3" width="30" height="30" fill="none" stroke="#676767" stroke-width="1"/>
<rect x="1039.5" y="276.3" width="14" height="14" fill="none" stroke="#b8b8b8" stroke-width="1.05"/>
<line x1="1031.5" y1="268.3" x2="1061.5" y2="268.3" stroke="#d04c4c" stroke-width="1.1"/>
<rect x="1030.1" y="266.9" width="2.8" height="2.8" fill="#e5a20a"/>
<rect x="1060.1" y="266.9" width="2.8" height="2.8" fill="#e5a20a"/>
<path d="M1041.5 283.3h10" stroke="#1fa2dd" stroke-width="1.3"/>
<path d="M1040.0 283.3l3-2.6v5.2z M1053.0 283.3l-3-2.6v5.2z" fill="#1fa2dd"/>
<rect x="887.5" y="311.6" width="30" height="30" fill="none" stroke="#676767" stroke-width="1"/>
<rect x="895.5" y="319.6" width="14" height="14" fill="none" stroke="#b8b8b8" stroke-width="1.05"/>
<line x1="887.5" y1="326.6" x2="917.5" y2="326.6" stroke="#d04c4c" stroke-width="1.1"/>
<line x1="887.5" y1="311.6" x2="887.5" y2="341.6" stroke="#d04c4c" stroke-width="1.1"/>
<rect x="886.1" y="325.2" width="2.8" height="2.8" fill="#e5a20a"/>
<rect x="930.5" y="311.6" width="30" height="30" fill="none" stroke="#676767" stroke-width="1"/>
<rect x="938.5" y="319.6" width="14" height="14" fill="none" stroke="#b8b8b8" stroke-width="1.05"/>
<line x1="930.5" y1="326.6" x2="960.5" y2="326.6" stroke="#d04c4c" stroke-width="1.1"/>
<line x1="945.5" y1="311.6" x2="945.5" y2="341.6" stroke="#d04c4c" stroke-width="1.1"/>
<rect x="944.1" y="325.2" width="2.8" height="2.8" fill="#e5a20a"/>
<rect x="973.5" y="311.6" width="30" height="30" fill="none" stroke="#676767" stroke-width="1"/>
<rect x="981.5" y="319.6" width="14" height="14" fill="none" stroke="#b8b8b8" stroke-width="1.05"/>
<line x1="973.5" y1="326.6" x2="1003.5" y2="326.6" stroke="#d04c4c" stroke-width="1.1"/>
<line x1="1003.5" y1="311.6" x2="1003.5" y2="341.6" stroke="#d04c4c" stroke-width="1.1"/>
<rect x="1002.1" y="325.2" width="2.8" height="2.8" fill="#e5a20a"/>
<rect x="1031.5" y="311.6" width="30" height="30" fill="none" stroke="#676767" stroke-width="1"/>
<rect x="1039.5" y="319.6" width="14" height="14" fill="none" stroke="#b8b8b8" stroke-width="1.05"/>
<line x1="1031.5" y1="326.6" x2="1061.5" y2="326.6" stroke="#d04c4c" stroke-width="1.1"/>
<rect x="1030.1" y="325.2" width="2.8" height="2.8" fill="#e5a20a"/>
<rect x="1060.1" y="325.2" width="2.8" height="2.8" fill="#e5a20a"/>
<path d="M1041.5 326.6h10" stroke="#1fa2dd" stroke-width="1.3"/>
<path d="M1040.0 326.6l3-2.6v5.2z M1053.0 326.6l-3-2.6v5.2z" fill="#1fa2dd"/>
<rect x="887.5" y="354.7" width="30" height="30" fill="none" stroke="#676767" stroke-width="1"/>
<rect x="895.5" y="362.7" width="14" height="14" fill="none" stroke="#b8b8b8" stroke-width="1.05"/>
<line x1="887.5" y1="384.7" x2="917.5" y2="384.7" stroke="#d04c4c" stroke-width="1.1"/>
<line x1="887.5" y1="354.7" x2="887.5" y2="384.7" stroke="#d04c4c" stroke-width="1.1"/>
<rect x="886.1" y="383.3" width="2.8" height="2.8" fill="#e5a20a"/>
<rect x="930.5" y="354.7" width="30" height="30" fill="none" stroke="#676767" stroke-width="1"/>
<rect x="938.5" y="362.7" width="14" height="14" fill="none" stroke="#b8b8b8" stroke-width="1.05"/>
<line x1="930.5" y1="384.7" x2="960.5" y2="384.7" stroke="#d04c4c" stroke-width="1.1"/>
<line x1="945.5" y1="354.7" x2="945.5" y2="384.7" stroke="#d04c4c" stroke-width="1.1"/>
<rect x="944.1" y="383.3" width="2.8" height="2.8" fill="#e5a20a"/>
<rect x="973.5" y="354.7" width="30" height="30" fill="none" stroke="#676767" stroke-width="1"/>
<rect x="981.5" y="362.7" width="14" height="14" fill="none" stroke="#b8b8b8" stroke-width="1.05"/>
<line x1="973.5" y1="384.7" x2="1003.5" y2="384.7" stroke="#d04c4c" stroke-width="1.1"/>
<line x1="1003.5" y1="354.7" x2="1003.5" y2="384.7" stroke="#d04c4c" stroke-width="1.1"/>
<rect x="1002.1" y="383.3" width="2.8" height="2.8" fill="#e5a20a"/>
<rect x="1031.5" y="354.7" width="30" height="30" fill="none" stroke="#676767" stroke-width="1"/>
<rect x="1039.5" y="362.7" width="14" height="14" fill="none" stroke="#b8b8b8" stroke-width="1.05"/>
<line x1="1031.5" y1="384.7" x2="1061.5" y2="384.7" stroke="#d04c4c" stroke-width="1.1"/>
<rect x="1030.1" y="383.3" width="2.8" height="2.8" fill="#e5a20a"/>
<rect x="1060.1" y="383.3" width="2.8" height="2.8" fill="#e5a20a"/>
<path d="M1041.5 369.7h10" stroke="#1fa2dd" stroke-width="1.3"/>
<path d="M1040.0 369.7l3-2.6v5.2z M1053.0 369.7l-3-2.6v5.2z" fill="#1fa2dd"/>
<rect x="887.5" y="412.6" width="30" height="30" fill="none" stroke="#676767" stroke-width="1"/>
<rect x="895.5" y="420.6" width="14" height="14" fill="none" stroke="#b8b8b8" stroke-width="1.05"/>
<line x1="887.5" y1="412.6" x2="887.5" y2="442.6" stroke="#d04c4c" stroke-width="1.1"/>
<rect x="886.1" y="411.2" width="2.8" height="2.8" fill="#e5a20a"/>
<rect x="886.1" y="441.2" width="2.8" height="2.8" fill="#e5a20a"/>
<path d="M902.5 422.6v10" stroke="#1fa2dd" stroke-width="1.3"/>
<path d="M902.5 421.1l-2.6 3h5.2z M902.5 434.1l-2.6-3h5.2z" fill="#1fa2dd"/>
<rect x="930.5" y="412.6" width="30" height="30" fill="none" stroke="#676767" stroke-width="1"/>
<rect x="938.5" y="420.6" width="14" height="14" fill="none" stroke="#b8b8b8" stroke-width="1.05"/>
<line x1="945.5" y1="412.6" x2="945.5" y2="442.6" stroke="#d04c4c" stroke-width="1.1"/>
<rect x="944.1" y="411.2" width="2.8" height="2.8" fill="#e5a20a"/>
<rect x="944.1" y="441.2" width="2.8" height="2.8" fill="#e5a20a"/>
<path d="M945.5 422.6v10" stroke="#1fa2dd" stroke-width="1.3"/>
<path d="M945.5 421.1l-2.6 3h5.2z M945.5 434.1l-2.6-3h5.2z" fill="#1fa2dd"/>
<rect x="973.5" y="412.6" width="30" height="30" fill="none" stroke="#676767" stroke-width="1"/>
<rect x="981.5" y="420.6" width="14" height="14" fill="none" stroke="#b8b8b8" stroke-width="1.05"/>
<line x1="1003.5" y1="412.6" x2="1003.5" y2="442.6" stroke="#d04c4c" stroke-width="1.1"/>
<rect x="1002.1" y="411.2" width="2.8" height="2.8" fill="#e5a20a"/>
<rect x="1002.1" y="441.2" width="2.8" height="2.8" fill="#e5a20a"/>
<path d="M988.5 422.6v10" stroke="#1fa2dd" stroke-width="1.3"/>
<path d="M988.5 421.1l-2.6 3h5.2z M988.5 434.1l-2.6-3h5.2z" fill="#1fa2dd"/>
<rect x="1031.5" y="412.6" width="30" height="30" fill="none" stroke="#676767" stroke-width="1"/>
<rect x="1039.5" y="420.6" width="14" height="14" fill="none" stroke="#b8b8b8" stroke-width="1.05"/>
<rect x="1030.1" y="411.2" width="2.8" height="2.8" fill="#e5a20a"/>
<rect x="1030.1" y="441.2" width="2.8" height="2.8" fill="#e5a20a"/>
<rect x="1060.1" y="411.2" width="2.8" height="2.8" fill="#e5a20a"/>
<rect x="1060.1" y="441.2" width="2.8" height="2.8" fill="#e5a20a"/>
<path d="M1041.5 427.6h10M1046.5 422.6v10" stroke="#1fa2dd" stroke-width="1.3"/>
<path d="M1040.0 427.6l3-2.6v5.2z M1053.0 427.6l-3-2.6v5.2z M1046.5 421.1l-2.6 3h5.2z M1046.5 434.1l-2.6-3h5.2z" fill="#1fa2dd"/>
<rect x="924.3" y="204.2" width="42.4" height="42.6" fill="none" stroke="#e8e8e8" stroke-width="1.3"/>
<rect x="823.6" y="262.0" width="42.4" height="42.6" fill="none" stroke="#e8e8e8" stroke-width="1.3"/>
<rect x="924.3" y="262.0" width="42.4" height="42.6" fill="none" stroke="#e8e8e8" stroke-width="1.3"/>
</svg>

<!-- console -->
<div class="a" style="left:0;top:384px;width:786px;height:1px;background:#1b1b1b"></div>
<div class="a" style="left:0;top:385px;width:786px;height:20px;background:#282828"></div>
<div class="a" style="left:0;top:405px;width:786px;height:20px;background:#3c3c3c"></div>
<div class="a" style="left:0;top:425px;width:786px;height:180px;background:#383838"></div>
<div class="a" style="left:0;top:425px;width:786px;height:1px;background:#2a2a2a"></div>
<div class="a" style="left:0;top:545px;width:786px;height:1px;background:#262626"></div>
<div class="a" style="left:772px;top:391px;width:2px;height:2px;background:#d0d0d0"></div>
<div class="a" style="left:772px;top:395px;width:2px;height:2px;background:#d0d0d0"></div>
<div class="a" style="left:772px;top:399px;width:2px;height:2px;background:#d0d0d0"></div>
<div class="a" style="left:381px;top:407px;width:300px;height:16px;background:#2a2a2a;border:1px solid #222;border-radius:4px"></div>
<svg class="a" style="left:381px;top:407px" width="20" height="16">
<circle cx="7.2" cy="7.2" r="2.1" fill="none" stroke="#d0d0d0" stroke-width="1.1"/>
<path d="M8.8 8.8l2.8 2.8" stroke="#d0d0d0" stroke-width="1.4"/>
</svg>
<div class="a" style="left:683px;top:405px;width:1px;height:20px;background:#2a2a2a"></div>
<div class="a" style="left:684px;top:405px;width:33px;height:20px;background:#3c3c3c"></div>
<div class="a" style="left:717px;top:405px;width:1px;height:20px;background:#2a2a2a"></div>
<div class="a" style="left:718px;top:405px;width:33px;height:20px;background:#3c3c3c"></div>
<div class="a" style="left:751px;top:405px;width:1px;height:20px;background:#2a2a2a"></div>
<div class="a" style="left:752px;top:405px;width:33px;height:20px;background:#4f4f4f"></div>
<svg class="a" style="left:684px;top:405px" width="102" height="20">
<circle cx="11.2" cy="9.6" r="6.5" fill="#8a8a8a"/>
<path d="M12 14l3.8 3.8-0.3-4.5z" fill="#8a8a8a"/>
<rect x="10.4" y="5.5" width="1.6" height="6" fill="#3c3c3c"/><rect x="10.4" y="12.5" width="1.6" height="1.6" fill="#3c3c3c"/>
<path d="M46 4l6.6 11.8h-13.2z" fill="#8a8a8a"/>
<rect x="45.2" y="8" width="1.6" height="4.5" fill="#3c3c3c"/><rect x="45.2" y="13.3" width="1.6" height="1.5" fill="#3c3c3c"/>
<path d="M76.6 3.7h4.8l3.4 3.4v4.8l-3.4 3.4h-4.8l-3.4-3.4v-4.8z" fill="#d2d2d2"/>
<rect x="78.2" y="5.5" width="1.6" height="6" fill="#4f4f4f"/><rect x="78.2" y="12.4" width="1.6" height="1.6" fill="#4f4f4f"/>
</svg>
<div class="lbl" style="left:705.5px;top:409px;font-size:12px;color:#c4c4c4">0</div>
<div class="lbl" style="left:739.5px;top:409px;font-size:12px;color:#c4c4c4">0</div>
<div class="lbl" style="left:773.5px;top:409px;font-size:12px;color:#d2d2d2">0</div>

<!-- status -->
<div class="a" style="left:0;top:605px;width:1110px;height:9px;background:#1a1a1a"></div>
<div class="a" style="left:1032px;top:606px;width:1px;height:8px;background:#2c2c2c"></div>
<div class="a" style="left:1057px;top:606px;width:1px;height:8px;background:#2c2c2c"></div>
<div class="a" style="left:1083px;top:606px;width:1px;height:8px;background:#2c2c2c"></div>
<svg class="a" style="left:1030px;top:605px" width="80" height="9">
<path d="M7 6l3 1.5 2-1.5 1.5 3h-5z M13 6.5l2-1 0 2.5z" fill="#b8b8b8"/>
<path d="M34 7c2-2 6-2.5 9-1.5c1 1 1.5 2.5 1.5 3.5h-9z" fill="#c8c8c8"/>
<path d="M60 9a6 5 0 0 1 12 0" fill="none" stroke="#b8b8b8" stroke-width="1.2"/>
</svg>
</div></body></html>
